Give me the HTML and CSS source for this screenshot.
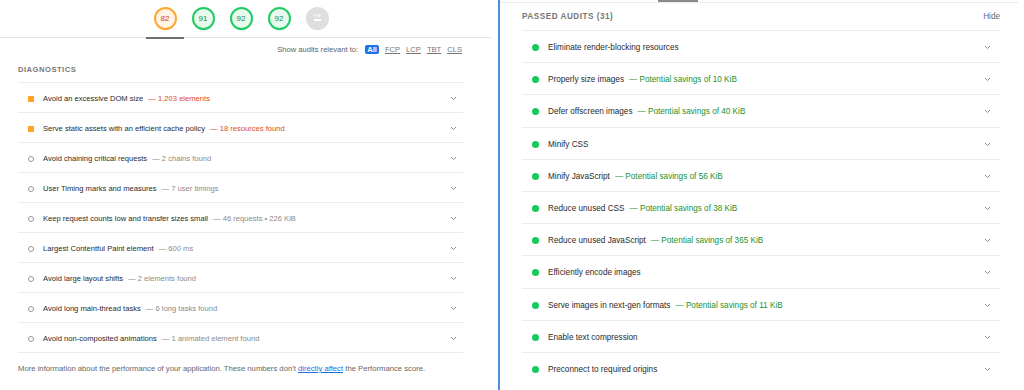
FILE: index.html
```html
<!DOCTYPE html>
<html>
<head>
<meta charset="utf-8">
<link rel="stylesheet" href="styles.css">
</head>
<body>
<div class="page">
  <section class="left">
    <div class="gauges">
      <div class="tab active"><span class="gauge avg">82</span></div>
      <div class="tab"><span class="gauge pass">91</span></div>
      <div class="tab"><span class="gauge pass">92</span></div>
      <div class="tab"><span class="gauge pass">92</span></div>
      <div class="tab"><span class="gauge na"><span class="na-label">PWA</span><span class="na-dash"></span></span></div>
    </div>
    <div class="filter">
      <span class="filter-label">Show audits relevant to:</span>
      <span class="chip on">All</span>
      <span class="chip">FCP</span>
      <span class="chip">LCP</span>
      <span class="chip">TBT</span>
      <span class="chip">CLS</span>
    </div>
    <div class="diag">
      <h2 class="group-title">Diagnostics</h2>
      <ul class="audits">
        <li class="audit"><span class="ico sq"></span><span class="title">Avoid an excessive DOM size</span><span class="disp warn">— 1,203 elements</span><svg class="chev" viewBox="0 0 7 5"><path d="M1 1l2.5 2.5L6 1"/></svg></li>
        <li class="audit"><span class="ico sq"></span><span class="title">Serve static assets with an efficient cache policy</span><span class="disp warn">— 18 resources found</span><svg class="chev" viewBox="0 0 7 5"><path d="M1 1l2.5 2.5L6 1"/></svg></li>
        <li class="audit"><span class="ico ring"></span><span class="title">Avoid chaining critical requests</span><span class="disp">— 2 chains found</span><svg class="chev" viewBox="0 0 7 5"><path d="M1 1l2.5 2.5L6 1"/></svg></li>
        <li class="audit"><span class="ico ring"></span><span class="title">User Timing marks and measures</span><span class="disp">— 7 user timings</span><svg class="chev" viewBox="0 0 7 5"><path d="M1 1l2.5 2.5L6 1"/></svg></li>
        <li class="audit"><span class="ico ring"></span><span class="title">Keep request counts low and transfer sizes small</span><span class="disp">— 46 requests • 226 KiB</span><svg class="chev" viewBox="0 0 7 5"><path d="M1 1l2.5 2.5L6 1"/></svg></li>
        <li class="audit"><span class="ico ring"></span><span class="title">Largest Contentful Paint element</span><span class="disp">— 600 ms</span><svg class="chev" viewBox="0 0 7 5"><path d="M1 1l2.5 2.5L6 1"/></svg></li>
        <li class="audit"><span class="ico ring"></span><span class="title">Avoid large layout shifts</span><span class="disp">— 2 elements found</span><svg class="chev" viewBox="0 0 7 5"><path d="M1 1l2.5 2.5L6 1"/></svg></li>
        <li class="audit"><span class="ico ring"></span><span class="title">Avoid long main-thread tasks</span><span class="disp">— 6 long tasks found</span><svg class="chev" viewBox="0 0 7 5"><path d="M1 1l2.5 2.5L6 1"/></svg></li>
        <li class="audit"><span class="ico ring"></span><span class="title">Avoid non-composited animations</span><span class="disp">— 1 animated element found</span><svg class="chev" viewBox="0 0 7 5"><path d="M1 1l2.5 2.5L6 1"/></svg></li>
      </ul>
      <p class="note">More information about the performance of your application. These numbers don't <a href="#">directly affect</a> the Performance score.</p>
    </div>
  </section>

  <section class="right">
    <div class="strip"><span class="strip-tab"></span></div>
    <div class="passed">
      <div class="passed-head"><h2 class="group-title big">Passed audits (31)</h2><span class="hide">Hide</span></div>
      <ul class="audits">
        <li class="audit rt"><span class="ico dot"></span><span class="title">Eliminate render-blocking resources</span><svg class="chev" viewBox="0 0 7 5"><path d="M1 1l2.5 2.5L6 1"/></svg></li>
        <li class="audit rt"><span class="ico dot"></span><span class="title">Properly size images</span><span class="disp ok">— Potential savings of 10 KiB</span><svg class="chev" viewBox="0 0 7 5"><path d="M1 1l2.5 2.5L6 1"/></svg></li>
        <li class="audit rt"><span class="ico dot"></span><span class="title">Defer offscreen images</span><span class="disp ok">— Potential savings of 40 KiB</span><svg class="chev" viewBox="0 0 7 5"><path d="M1 1l2.5 2.5L6 1"/></svg></li>
        <li class="audit rt"><span class="ico dot"></span><span class="title">Minify CSS</span><svg class="chev" viewBox="0 0 7 5"><path d="M1 1l2.5 2.5L6 1"/></svg></li>
        <li class="audit rt"><span class="ico dot"></span><span class="title">Minify JavaScript</span><span class="disp ok">— Potential savings of 56 KiB</span><svg class="chev" viewBox="0 0 7 5"><path d="M1 1l2.5 2.5L6 1"/></svg></li>
        <li class="audit rt"><span class="ico dot"></span><span class="title">Reduce unused CSS</span><span class="disp ok">— Potential savings of 38 KiB</span><svg class="chev" viewBox="0 0 7 5"><path d="M1 1l2.5 2.5L6 1"/></svg></li>
        <li class="audit rt"><span class="ico dot"></span><span class="title">Reduce unused JavaScript</span><span class="disp ok">— Potential savings of 365 KiB</span><svg class="chev" viewBox="0 0 7 5"><path d="M1 1l2.5 2.5L6 1"/></svg></li>
        <li class="audit rt"><span class="ico dot"></span><span class="title">Efficiently encode images</span><svg class="chev" viewBox="0 0 7 5"><path d="M1 1l2.5 2.5L6 1"/></svg></li>
        <li class="audit rt"><span class="ico dot"></span><span class="title">Serve images in next-gen formats</span><span class="disp ok">— Potential savings of 11 KiB</span><svg class="chev" viewBox="0 0 7 5"><path d="M1 1l2.5 2.5L6 1"/></svg></li>
        <li class="audit rt"><span class="ico dot"></span><span class="title">Enable text compression</span><svg class="chev" viewBox="0 0 7 5"><path d="M1 1l2.5 2.5L6 1"/></svg></li>
        <li class="audit rt"><span class="ico dot"></span><span class="title">Preconnect to required origins</span><svg class="chev" viewBox="0 0 7 5"><path d="M1 1l2.5 2.5L6 1"/></svg></li>
      </ul>
    </div>
  </section>
</div>
</body>
</html>
```

FILE: styles.css
```css
* { box-sizing: border-box; }
html, body { margin: 0; padding: 0; background: #fff; }
body {
  font-family: "Liberation Sans", Arial, sans-serif;
  color: #212121;
  width: 1024px;
  height: 390px;
  overflow: hidden;
}
ul { list-style: none; margin: 0; padding: 0; }
h2 { margin: 0; }
p { margin: 0; }

.page {
  display: flex;
  gap: 7px;
  height: 390px;
}

/* ---------- left ---------- */
.left {
  width: 491px;
  flex: none;
}
.gauges {
  display: flex;
  height: 38px;
  padding-left: 146px;
  border-bottom: 1px solid #e4e4e4;
}
.tab {
  width: 38px;
  height: 38px;
  display: flex;
  align-items: center;
  justify-content: center;
  padding-bottom: 2px;
}
.tab.active {
  border-bottom: 2px solid #6f6f6f;
  height: 39px;
  padding-bottom: 0;
  margin-bottom: -1px;
}
.gauge {
  width: 23px;
  height: 23px;
  border-radius: 50%;
  display: flex;
  align-items: center;
  justify-content: center;
  font-size: 8px;
  font-weight: 500;
  position: relative;
}
.gauge.avg { border: 2px solid #ffa733; background: #fff4e6; color: #d23f1c; }
.gauge.pass { border: 2px solid #1fcc64; background: #e8f9ee; color: #168a3b; }
.gauge.na {
  background: #dedede;
  flex-direction: column;
  gap: 1px;
}
.na-label { font-size: 3px; color: #fff; line-height: 3px; }
.na-dash { width: 7px; height: 2px; background: #fff; }

.filter {
  display: flex;
  justify-content: flex-end;
  align-items: center;
  gap: 6px;
  height: 20px;
  padding-top: 2px;
  padding-right: 29px;
  font-size: 7.6px;
  color: #666;
}
.filter-label { margin-right: 1px; color: #5f5f5f; }
.chip {
  text-decoration: underline;
  color: #777;
  line-height: 9px;
}
.chip.on {
  text-decoration: none;
  background: #1a73e8;
  color: #fff;
  font-weight: bold;
  padding: 0 2px;
  border-radius: 2px;
}

.diag {
  padding: 0 28px 0 18px;
}
.group-title {
  font-size: 7.6px;
  font-weight: 600;
  letter-spacing: 0.5px;
  color: #777;
  text-transform: uppercase;
  line-height: 10px;
}
.diag > .group-title {
  height: 25px;
  padding-top: 7px;
  border-bottom: 1px solid #ececec;
}

.audit {
  display: flex;
  align-items: center;
  height: 30px;
  border-bottom: 1px solid #ececec;
  padding: 2px 6px 0 10px;
  font-size: 7.6px;
  white-space: nowrap;
}
.ico { flex: none; margin-right: 9px; }
.ico.sq { width: 6px; height: 6px; background: #ffa426; }
.ico.ring { width: 6px; height: 6px; border: 1px solid #9a9a9a; border-radius: 50%; }
.ico.dot { width: 7px; height: 7px; background: #16c95c; border-radius: 50%; }
.title { color: #2a2a2a; }
.disp { color: #8a8a8a; margin-left: 5px; }
.disp.warn { color: #dd4a1c; }
.disp.ok { color: #23912f; }
.chev {
  margin-left: auto;
  width: 7px;
  height: 5px;
  fill: none;
  stroke: #8c8c8c;
  stroke-width: 1;
}

.note {
  margin-top: 11px;
  font-size: 7.7px;
  line-height: 10px;
  color: #666;
}
.note a { color: #1a6fe0; }

/* ---------- right ---------- */
.right {
  flex: 1;
  border-left: 2px solid #4a8fdc;
}
.strip {
  height: 3px;
  margin-right: 6px;
  border-bottom: 1px solid #ebebeb;
  padding-left: 158px;
}
.strip-tab { display: block; width: 40px; height: 2px; background: #8a8a8a; }
.passed {
  padding: 0 24px 0 22px;
}
.passed-head {
  display: flex;
  align-items: center;
  justify-content: space-between;
  height: 28px;
  border-bottom: 1px solid #ececec;
}
.group-title.big { font-size: 8.2px; }
.hide { font-size: 8.2px; color: #666; }

.audit.rt {
  height: 32.2px;
  font-size: 8.2px;
  padding: 2px 9px 0 10px;
}
.audit.rt .ico { margin-right: 9px; }
.audit.rt:last-child { border-bottom: none; }
```
